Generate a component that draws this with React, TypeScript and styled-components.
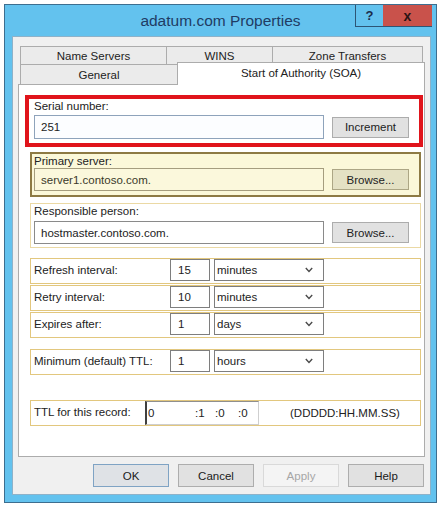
import React from "react";
import styled, { createGlobalStyle, css } from "styled-components";

const Global = createGlobalStyle`
  html, body { margin: 0; padding: 0; background: #ffffff; }
  body { font-family: "Liberation Sans", Arial, sans-serif; font-size: 11.5px; color: #1e1e1e; }
  * { box-sizing: border-box; }
`;

const Window = styled.div`
  margin: 4px;
  width: 433px;
  height: 499px;
  border: 1px solid #3d6e8f;
  background: #63c2ee;
  display: flex;
  flex-direction: column;
`;

const TitleBar = styled.div`
  display: grid;
  grid-template-columns: 81px 1fr 81px;
  height: 31px;
  flex-shrink: 0;
`;

const Title = styled.div`
  text-align: center;
  line-height: 31px;
  font-size: 15.5px;
  color: #1f3c64;
`;

const Captions = styled.div`
  display: flex;
  height: 22px;
`;

const CapButton = styled.div<{ $kind: "help" | "close" }>`
  height: 22px;
  display: flex;
  align-items: center;
  justify-content: center;
  font-weight: bold;
  border-bottom: 1px solid #2d5575;
  ${(p) =>
    p.$kind === "help"
      ? css`
          width: 28px;
          border-left: 1px solid #2d5575;
          font-size: 13px;
          color: #1b2b4b;
        `
      : css`
          width: 49px;
          background: #c9524b;
          font-size: 14px;
          color: #2b1414;
        `}
`;

const Client = styled.div`
  flex: 1;
  margin: 0 5px 7px 7px;
  border: 1px solid #8eb2c9;
  background: #f0f0f0;
  padding: 9px 5px 7px 5px;
  display: flex;
  flex-direction: column;
`;

const TabRow = styled.div<{ $h: number }>`
  display: flex;
  align-items: flex-end;
  margin: 0 2px;
  height: ${(p) => p.$h}px;
  flex-shrink: 0;
`;

const Tab = styled.div<{ $w?: number; $active?: boolean; $first?: boolean }>`
  ${(p) => (p.$w ? `width: ${p.$w}px;` : "flex: 1;")}
  height: 100%;
  margin-left: ${(p) => (p.$first ? 0 : -1)}px;
  border: 1px solid #acacac;
  border-bottom: none;
  background: #ebebeb;
  display: flex;
  align-items: center;
  justify-content: center;
  color: #222;
  ${(p) =>
    p.$active &&
    css`
      position: relative;
      z-index: 1;
      height: 23px;
      margin-bottom: -1px;
      margin-right: -2px;
      background: #ffffff;
      padding-bottom: 3px;
    `}
`;

const Panel = styled.div`
  flex: 1;
  background: #ffffff;
  border: 1px solid #acacac;
  padding: 10px 0 0 6px;
  display: flex;
  flex-direction: column;
`;

type Tone = "alert" | "hilite" | "plain";

const Group = styled.div<{ $tone: Tone }>`
  ${(p) =>
    p.$tone === "alert"
      ? css`
          width: 398px;
          border: 4px solid #e0141b;
          padding: 0 0 4px 5px;
          background: #ffffff;
        `
      : p.$tone === "hilite"
      ? css`
          width: 391px;
          margin: 5px 0 0 5px;
          border: 2px solid #8d7a44;
          padding: 0 0 4px 2px;
          background: #fbf8d9;
        `
      : css`
          width: 391px;
          margin: 6px 0 0 5px;
          border: 1px solid #ebd9a4;
          padding: 0 0 3px 3px;
          background: #ffffff;
        `}
`;

const GroupLabel = styled.div<{ $gap: number }>`
  line-height: 14px;
  margin-bottom: ${(p) => p.$gap}px;
  color: #222;
`;

const FieldRow = styled.div`
  display: flex;
  align-items: center;
  gap: 8px;
`;

const TextBox = styled.div<{ $tone: Tone }>`
  width: 290px;
  height: ${(p) => (p.$tone === "alert" ? 24 : 23)}px;
  display: flex;
  align-items: center;
  padding-left: 6px;
  color: #222;
  ${(p) =>
    p.$tone === "alert"
      ? css`
          border: 1px solid #8ea3bb;
          background: #fcfdff;
        `
      : p.$tone === "hilite"
      ? css`
          border: 1px solid #a59d7e;
          background: #fbf8dc;
          color: #3a3a2a;
        `
      : css`
          border: 1px solid #8a8a8a;
          background: #ffffff;
        `}
`;

const SideButton = styled.div<{ $tone: Tone }>`
  width: 77px;
  height: 21px;
  display: flex;
  align-items: center;
  justify-content: center;
  color: #222;
  border: 1px solid ${(p) => (p.$tone === "hilite" ? "#aca685" : "#acacac")};
  background: ${(p) => (p.$tone === "hilite" ? "#e4e1c4" : "#e1e1e1")};
`;

const SettingRow = styled.div<{ $top: number }>`
  width: 391px;
  height: 26px;
  margin: ${(p) => p.$top}px 0 0 5px;
  border: 1px solid #e2c77e;
  padding-left: 3px;
  display: flex;
  align-items: flex-start;
  flex-shrink: 0;
`;

const RowLabel = styled.div<{ $w: number }>`
  width: ${(p) => p.$w}px;
  line-height: 22px;
  color: #222;
`;

const NumBox = styled.div`
  width: 40px;
  height: 22px;
  border: 1px solid #7e7e7e;
  padding-left: 7px;
  line-height: 20px;
  color: #222;
`;

const Select = styled.div`
  width: 110px;
  height: 22px;
  margin-left: 4px;
  border: 1px solid #7e7e7e;
  padding: 0 10px 0 2px;
  display: flex;
  align-items: center;
  justify-content: space-between;
  color: #222;
`;

const TtlBox = styled.div`
  width: 114px;
  height: 24px;
  border: 1px solid #cfcfcf;
  border-top-color: #8f8f8f;
  border-left: 2px solid #3f3f3f;
  padding-left: 1px;
  display: flex;
  align-items: center;
  color: #222;
`;

const TtlSeg = styled.span<{ $w: number }>`
  display: inline-block;
  width: ${(p) => p.$w}px;
`;

const TtlHint = styled.div`
  margin-left: 31px;
  line-height: 24px;
  color: #222;
`;

const Footer = styled.div`
  display: flex;
  justify-content: flex-end;
  gap: 9px;
  margin-top: 7px;
  padding-right: 1px;
  flex-shrink: 0;
`;

const DlgButton = styled.div<{ $variant?: "default" | "disabled" }>`
  width: 76px;
  height: 23px;
  display: flex;
  align-items: center;
  justify-content: center;
  border: 1px solid #adadad;
  background: #e1e1e1;
  color: #1a1a1a;
  ${(p) =>
    p.$variant === "default" &&
    css`
      border-color: #7fa3c4;
      background: #dfe2e6;
    `}
  ${(p) =>
    p.$variant === "disabled" &&
    css`
      border-color: #d9d9d9;
      background: #f4f4f4;
      color: #a6a6a6;
    `}
`;

const Chevron = () => (
  <svg width="8" height="6" viewBox="0 0 8 6">
    <polyline points="0.8,1 4,4.4 7.2,1" fill="none" stroke="#4a4a4a" strokeWidth="1.4" />
  </svg>
);

const intervals = [
  { label: "Refresh interval:", value: "15", unit: "minutes", top: 10 },
  { label: "Retry interval:", value: "10", unit: "minutes", top: 1 },
  { label: "Expires after:", value: "1", unit: "days", top: 1 },
  { label: "Minimum (default) TTL:", value: "1", unit: "hours", top: 11 },
];

export default function App() {
  return (
    <>
      <Global />
      <Window>
        <TitleBar>
          <div />
          <Title>adatum.com Properties</Title>
          <Captions>
            <CapButton $kind="help">?</CapButton>
            <CapButton $kind="close">x</CapButton>
          </Captions>
        </TitleBar>
        <Client>
          <TabRow $h={18}>
            <Tab $w={147} $first>Name Servers</Tab>
            <Tab $w={107}>WINS</Tab>
            <Tab>Zone Transfers</Tab>
          </TabRow>
          <TabRow $h={20}>
            <Tab $w={158} $first>General</Tab>
            <Tab $active>Start of Authority (SOA)</Tab>
          </TabRow>
          <Panel>
            <Group $tone="alert">
              <GroupLabel $gap={2}>Serial number:</GroupLabel>
              <FieldRow>
                <TextBox $tone="alert">251</TextBox>
                <SideButton $tone="alert">Increment</SideButton>
              </FieldRow>
            </Group>
            <Group $tone="hilite">
              <GroupLabel $gap={0}>Primary server:</GroupLabel>
              <FieldRow>
                <TextBox $tone="hilite">server1.contoso.com.</TextBox>
                <SideButton $tone="hilite">Browse...</SideButton>
              </FieldRow>
            </Group>
            <Group $tone="plain">
              <GroupLabel $gap={3}>Responsible person:</GroupLabel>
              <FieldRow>
                <TextBox $tone="plain">hostmaster.contoso.com.</TextBox>
                <SideButton $tone="plain">Browse...</SideButton>
              </FieldRow>
            </Group>
            {intervals.map((r) => (
              <SettingRow key={r.label} $top={r.top}>
                <RowLabel $w={136}>{r.label}</RowLabel>
                <NumBox>{r.value}</NumBox>
                <Select>
                  <span>{r.unit}</span>
                  <Chevron />
                </Select>
              </SettingRow>
            ))}
            <SettingRow $top={25}>
              <RowLabel $w={111}>TTL for this record:</RowLabel>
              <TtlBox>
                <TtlSeg $w={47}>0</TtlSeg>
                <TtlSeg $w={20}>:1</TtlSeg>
                <TtlSeg $w={23}>:0</TtlSeg>
                <TtlSeg $w={12}>:0</TtlSeg>
              </TtlBox>
              <TtlHint>(DDDDD:HH.MM.SS)</TtlHint>
            </SettingRow>
          </Panel>
          <Footer>
            <DlgButton $variant="default">OK</DlgButton>
            <DlgButton>Cancel</DlgButton>
            <DlgButton $variant="disabled">Apply</DlgButton>
            <DlgButton>Help</DlgButton>
          </Footer>
        </Client>
      </Window>
    </>
  );
}
